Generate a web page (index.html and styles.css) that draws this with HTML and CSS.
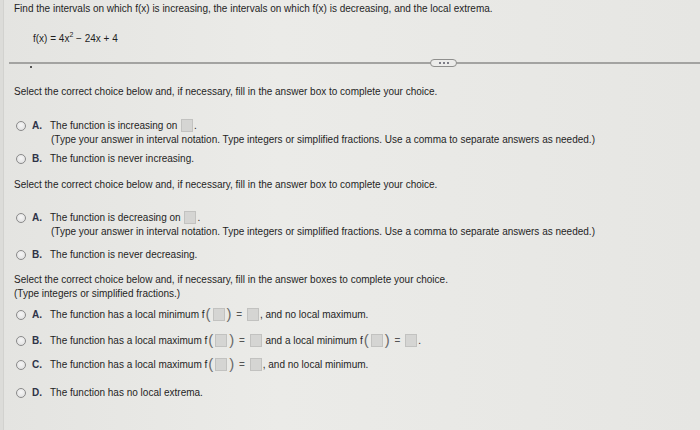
FILE: index.html
```html
<!DOCTYPE html>
<html>
<head>
<meta charset="utf-8">
<link rel="stylesheet" href="styles.css">
</head>
<body>
<div class="page">
  <div class="edge"></div>
  <div class="content">
    <div class="title">Find the intervals on which f(x) is increasing, the intervals on which f(x) is decreasing, and the local extrema.</div>
    <div class="formula">f(x) = 4x<sup>2</sup> &minus; 24x + 4</div>
    <div class="divider"><span class="pill"><i></i><i></i><i></i></span></div>
    <div class="dot"></div>

    <div class="prompt p1">Select the correct choice below and, if necessary, fill in the answer box to complete your choice.</div>
    <div class="choice c1"><span class="radio"></span><span class="let">A.</span><span class="txt">The function is increasing on <span class="box"></span>.</span></div>
    <div class="hint">(Type your answer in interval notation. Type integers or simplified fractions. Use a comma to separate answers as needed.)</div>
    <div class="choice c2"><span class="radio"></span><span class="let">B.</span><span class="txt">The function is never increasing.</span></div>

    <div class="prompt p2">Select the correct choice below and, if necessary, fill in the answer box to complete your choice.</div>
    <div class="choice c3"><span class="radio"></span><span class="let">A.</span><span class="txt">The function is decreasing on <span class="box"></span>.</span></div>
    <div class="hint">(Type your answer in interval notation. Type integers or simplified fractions. Use a comma to separate answers as needed.)</div>
    <div class="choice c4"><span class="radio"></span><span class="let">B.</span><span class="txt">The function is never decreasing.</span></div>

    <div class="prompt p3">Select the correct choice below and, if necessary, fill in the answer boxes to complete your choice.<br>(Type integers or simplified fractions.)</div>
    <div class="choice c5"><span class="radio"></span><span class="let">A.</span><span class="txt">The function has a local minimum f<span class="par">(</span><span class="box"></span><span class="par">)</span> <span class="eq">=</span> <span class="box"></span>, and no local maximum.</span></div>
    <div class="choice c6"><span class="radio"></span><span class="let">B.</span><span class="txt">The function has a local maximum f<span class="par">(</span><span class="box"></span><span class="par">)</span> <span class="eq">=</span> <span class="box"></span> and a local minimum f<span class="par">(</span><span class="box"></span><span class="par">)</span> <span class="eq">=</span> <span class="box"></span>.</span></div>
    <div class="choice c7"><span class="radio"></span><span class="let">C.</span><span class="txt">The function has a local maximum f<span class="par">(</span><span class="box"></span><span class="par">)</span> <span class="eq">=</span> <span class="box"></span>, and no local minimum.</span></div>
    <div class="choice c8"><span class="radio"></span><span class="let">D.</span><span class="txt">The function has no local extrema.</span></div>
  </div>
</div>
</body>
</html>
```

FILE: styles.css
```css
html, body {
  margin: 0;
  padding: 0;
}
body {
  width: 700px;
  height: 430px;
  overflow: hidden;
  background: #e9e9e6;
  font-family: "Liberation Sans", Arial, sans-serif;
  font-size: 10px;
  color: #1f1f1f;
}
.page {
  display: flex;
  height: 430px;
  background: linear-gradient(90deg, #e4e4e1 0%, #ebebe8 40%, #e6e6e3 100%);
}
.edge {
  width: 3px;
  border-right: 1px solid #d2d2cf;
  background: #dcdcd9;
  flex: none;
}
.content {
  flex: 1;
  padding-left: 10px;
}
.title {
  margin-top: 2px;
  line-height: 14px;
}
.formula {
  margin-top: 16px;
  padding-left: 19px;
  line-height: 14px;
}
.formula sup {
  font-size: 7px;
  line-height: 0;
  vertical-align: 5px;
}
.divider {
  margin-top: 16px;
  margin-left: -5px;
  height: 2px;
  background: #a3a3a1;
  position: relative;
}
.pill {
  position: absolute;
  left: 421px;
  top: -3px;
  width: 27px;
  height: 8px;
  box-sizing: border-box;
  border: 1px solid #8f8f8d;
  border-radius: 5px;
  background: #ececea;
  display: flex;
  justify-content: center;
  align-items: center;
  gap: 2px;
}
.pill i {
  width: 2px;
  height: 2px;
  border-radius: 1px;
  background: #5a5a66;
}
.dot {
  margin-left: 16px;
  margin-top: 2px;
  width: 2px;
  height: 2px;
  background: #555;
}
.prompt {
  line-height: 14px;
}
.p1 { margin-top: 17px; }
.p2 { margin-top: 12px; }
.p3 { margin-top: 11px; }
.choice {
  display: flex;
  align-items: center;
  height: 14px;
  line-height: 14px;
}
.c1 { margin-top: 20px; }
.c2 { margin-top: 5px; }
.c3 { margin-top: 19px; }
.c4 { margin-top: 9px; }
.c5 { margin-top: 7px; }
.c6 { margin-top: 12px; }
.c7 { margin-top: 10px; }
.c8 { margin-top: 14px; }
.radio {
  width: 10px;
  height: 10px;
  box-sizing: border-box;
  border: 1px solid #8a8a8a;
  border-radius: 50%;
  background: radial-gradient(circle at 50% 40%, #f6f6f6 0%, #dcdcdc 100%);
  margin-left: 2px;
  flex: none;
}
.let {
  font-weight: bold;
  color: #2e3348;
  margin-left: 6px;
  width: 18px;
  flex: none;
}
.txt {
  white-space: nowrap;
}
.hint {
  padding-left: 37px;
  line-height: 14px;
}
.box {
  display: inline-block;
  width: 12px;
  height: 13px;
  box-sizing: border-box;
  background: #d5d5d3;
  border: 1px solid #c2c2c0;
  vertical-align: -3px;
  margin: 0 1px;
}
.par {
  font-size: 15px;
  line-height: 10px;
  vertical-align: -1px;
  color: #6a6a6a;
  margin: 0 1px;
}
.eq {
  color: #555;
  margin: 0 1px;
}
```
